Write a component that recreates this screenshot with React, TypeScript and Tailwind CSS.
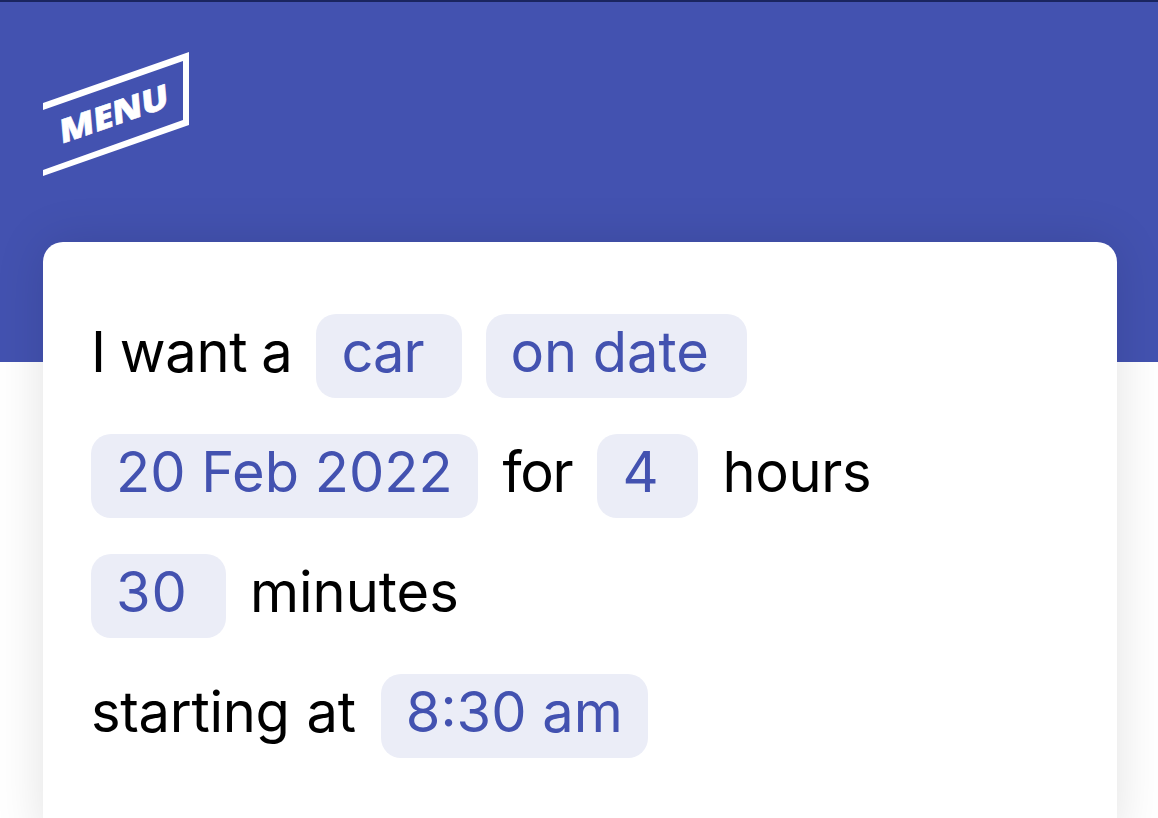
const Chip = ({ children, trail = false, track = "tracking-normal" }: { children: string; trail?: boolean; track?: string }) => (
  <span className={`flex h-[84px] items-center whitespace-pre rounded-[20px] bg-[#ebedf7] pb-2 pl-[25px] pr-[25px] text-[#4352b0] ${track}`}>
    {children}
    {trail ? <span className="inline-block w-[13px]" /> : null}
  </span>
);

const Plain = ({ children, extra = "tracking-[-0.005em] [word-spacing:-1.5px]" }: { children: string; extra?: string }) => (
  <span className={`pb-2 ${extra}`}>{children}</span>
);

const Row = ({ children, gap = "gap-[25px]" }: { children: React.ReactNode; gap?: string }) => (
  <div className={`flex h-[120px] items-center ${gap}`}>{children}</div>
);

export default function App() {
  return (
    <div className="h-[818px] overflow-hidden bg-white font-['Inter',sans-serif]">
      <header className="h-[362px] border-t-2 border-[#1a2560] bg-[#4352b0]">
        <svg width="240" height="200" viewBox="0 0 240 200" className="-mt-[2px] block" aria-label="Menu">
          <polygon points="43,103 189,52 189,125 43,176 43,170 183,120 183,61 43,110" fill="#fff" />
          <text
            transform="translate(61,144) rotate(-19) skewX(-14) scale(1.15,1)"
            fill="#fff"
            stroke="#fff"
            strokeWidth="0.6"
            fontFamily="'Open Sans', sans-serif"
            fontWeight="800"
            fontSize="32"
            letterSpacing="0"
          >
            MENU
          </text>
        </svg>
      </header>
      <main className="relative ml-[43px] mr-[41px] -mt-[120px] h-[600px] rounded-[20px] bg-white pl-[48px] pt-[54px] text-[56px] leading-none text-black shadow-[0_0_50px_rgba(0,0,0,0.12)]">
        <Row gap="gap-[24px]">
          <Plain>I want a</Plain>
          <Chip trail track="tracking-[-1px]">car</Chip>
          <Chip trail track="tracking-[-0.05px]">on date</Chip>
        </Row>
        <Row>
          <Chip track="tracking-[0px]">20 Feb 2022</Chip>
          <Plain extra="tracking-[-1.3px]">for</Plain>
          <Chip trail track="tracking-[1px]">4</Chip>
          <Plain extra="tracking-[-0.4px]">hours</Plain>
        </Row>
        <Row>
          <Chip trail track="tracking-[1px]">30</Chip>
          <Plain extra="tracking-[0px] -ml-px">minutes</Plain>
        </Row>
        <Row>
          <Plain extra="tracking-[-0.28px] [word-spacing:1.5px]">starting at</Plain>
          <Chip>8:30 am</Chip>
        </Row>
      </main>
    </div>
  );
}
